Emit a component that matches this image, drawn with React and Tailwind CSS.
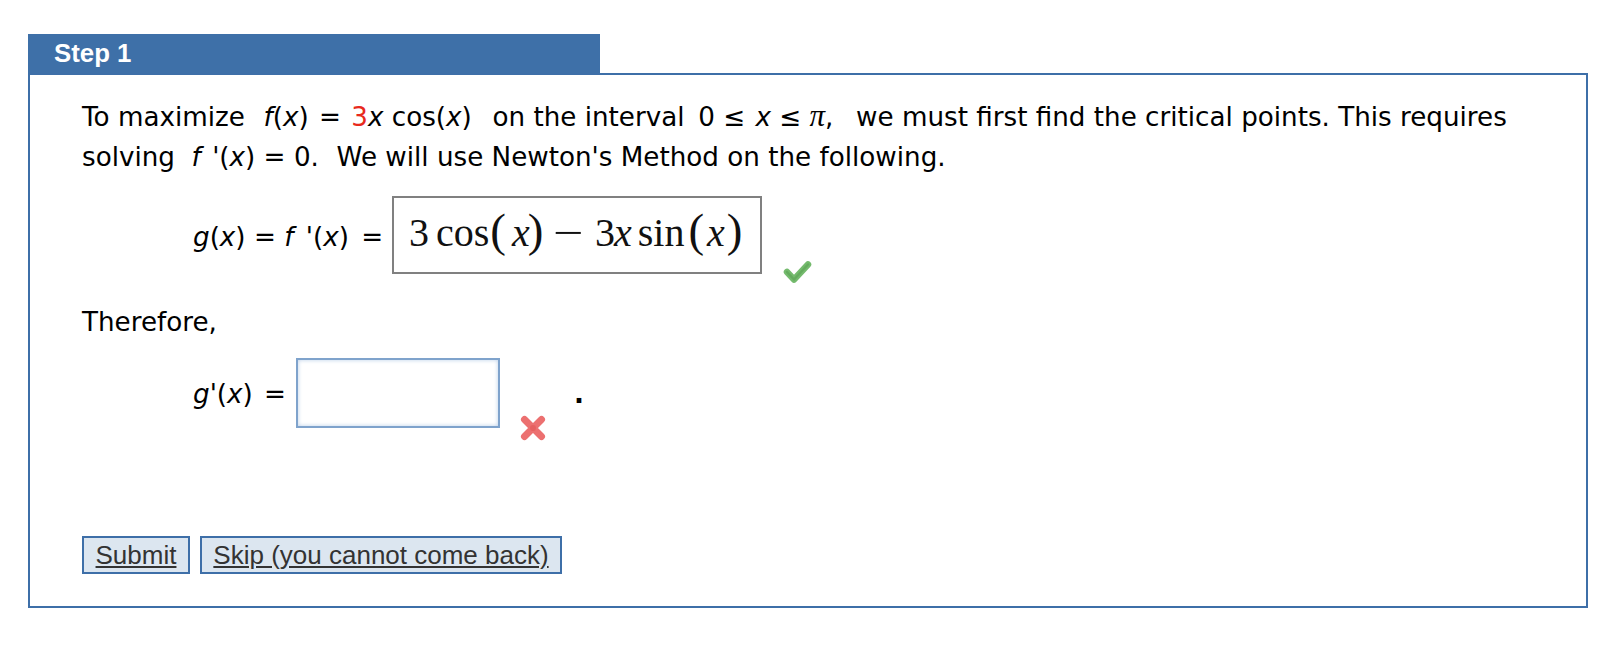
import React from "react";

const V = "font-['DejaVu_Sans',Verdana,sans-serif]";

function Check() {
  return (
    <svg width="30" height="26" viewBox="0 0 30 26" className="block blur-[0.7px]">
      <path d="M5 13 L12 20.5 L26 5.5" fill="none" stroke="#74ba6d" strokeWidth="6.5" strokeLinecap="round" strokeLinejoin="round" />
      <path d="M5 13 L12 20.5 L26 5.5" fill="none" stroke="#5aa253" strokeWidth="2.5" strokeLinecap="round" strokeLinejoin="round" opacity="0.6" />
    </svg>
  );
}

function Cross() {
  return (
    <svg width="28" height="28" viewBox="0 0 28 28" className="block blur-[0.7px]">
      <path d="M5.5 5.5 L22.5 22.5 M22.5 5.5 L5.5 22.5" fill="none" stroke="#ec7070" strokeWidth="7" strokeLinecap="round" />
      <circle cx="14" cy="14" r="3" fill="#e25555" opacity="0.6" />
    </svg>
  );
}

function Paren({ children, className }) {
  return <span className={`text-[47px] leading-none ${className}`}>{children}</span>;
}

export default function App() {
  return (
    <div className={`w-[1620px] h-[652px] bg-white pt-[34px] pl-[28px] ${V} text-[26.2px] text-black`}>
      <div className="w-[572px] h-[39px] bg-[#3e70a8] pl-[26px] flex items-center font-['Liberation_Sans',Arial,sans-serif] font-bold text-[25.8px] text-white">
        Step 1
      </div>
      <div className="w-[1560px] h-[535px] border-2 border-[#3e6fa8] pl-[52px] pt-[22px]">
        <p className="leading-[40px] whitespace-pre">
          To maximize<span className="ml-[2px]">  </span><i>f</i>(<i>x</i>)<span className="ml-[2px]"> = </span><span className="ml-[2px] text-[#e8291c]">3</span><i>x</i> cos(<i>x</i>)<span className="ml-[4px]">  </span>on the interval<span className="-ml-[3px]">  </span>0 ≤ <span className="ml-[2px]"><i>x</i></span> ≤ <i className="font-['Liberation_Serif',serif] text-[31px] leading-none">π</i>,<span className="ml-[6px]">  </span>we must first find the critical points. This requires
          {"\n"}solving  <i>f</i><span className="ml-[3px]"> </span>'(<i>x</i>) = 0.<span className="ml-[1px]">  </span>We will use Newton's Method on the following.
        </p>
        <div className="flex items-start mt-[19px] ml-[111px]">
          <span className="whitespace-pre leading-[40px] mt-[21px] w-[199px]"><i>g</i>(<i>x</i>) = <i>f</i><span className="ml-[4px]"> </span>'(<i>x</i>)<span className="ml-[4px]"> </span>=</span>
          <div className="w-[370px] h-[78px] border-2 border-[#808080] flex items-baseline pl-[15px] font-['Liberation_Serif',serif] text-[40px] leading-[70px] text-[#111] whitespace-pre">
            <span>3</span>
            <span className="ml-[7px]">cos</span>
            <Paren className="ml-[1px]">(</Paren>
            <i className="ml-[6px]">x</i>
            <Paren className="-ml-[2px]">)</Paren>
            <span className="ml-[14px] scale-x-[1.35]">−</span>
            <span className="ml-[15px]">3</span>
            <i className="-ml-[1px]">x</i>
            <span className="ml-[6px]">sin</span>
            <Paren className="ml-[4px]">(</Paren>
            <i className="ml-[3px]">x</i>
            <Paren className="ml-[2px]">)</Paren>
          </div>
          <div className="mt-[63px] ml-[20px]"><Check /></div>
        </div>
        <p className="mt-[17px] leading-[40px]">Therefore,</p>
        <div className="flex items-start mt-[16px] ml-[111px]">
          <span className="whitespace-pre leading-[40px] mt-[16px] w-[103px]"><i>g</i>'(<i>x</i>)<span className="ml-[3px]"> </span>=</span>
          <div className="w-[204px] h-[70px] border-2 border-[#7fa3cc] shadow-[inset_0_0_4px_#b9cfe8] bg-white" />
          <div className="mt-[56px] ml-[19px]"><Cross /></div>
          <span className="mt-[16px] ml-[27px] leading-[40px] font-bold">.</span>
        </div>
        <div className="flex gap-[10px] mt-[94px] font-['Liberation_Sans',Arial,sans-serif] text-[26px] text-[#333]">
          <a className="h-[38px] w-[108px] border-2 border-[#3e6fa8] bg-[#dce6f0] flex items-center justify-center underline">Submit</a>
          <a className="h-[38px] w-[362px] border-2 border-[#3e6fa8] bg-[#dce6f0] flex items-center justify-center underline whitespace-pre">Skip (you cannot come back)</a>
        </div>
      </div>
    </div>
  );
}
